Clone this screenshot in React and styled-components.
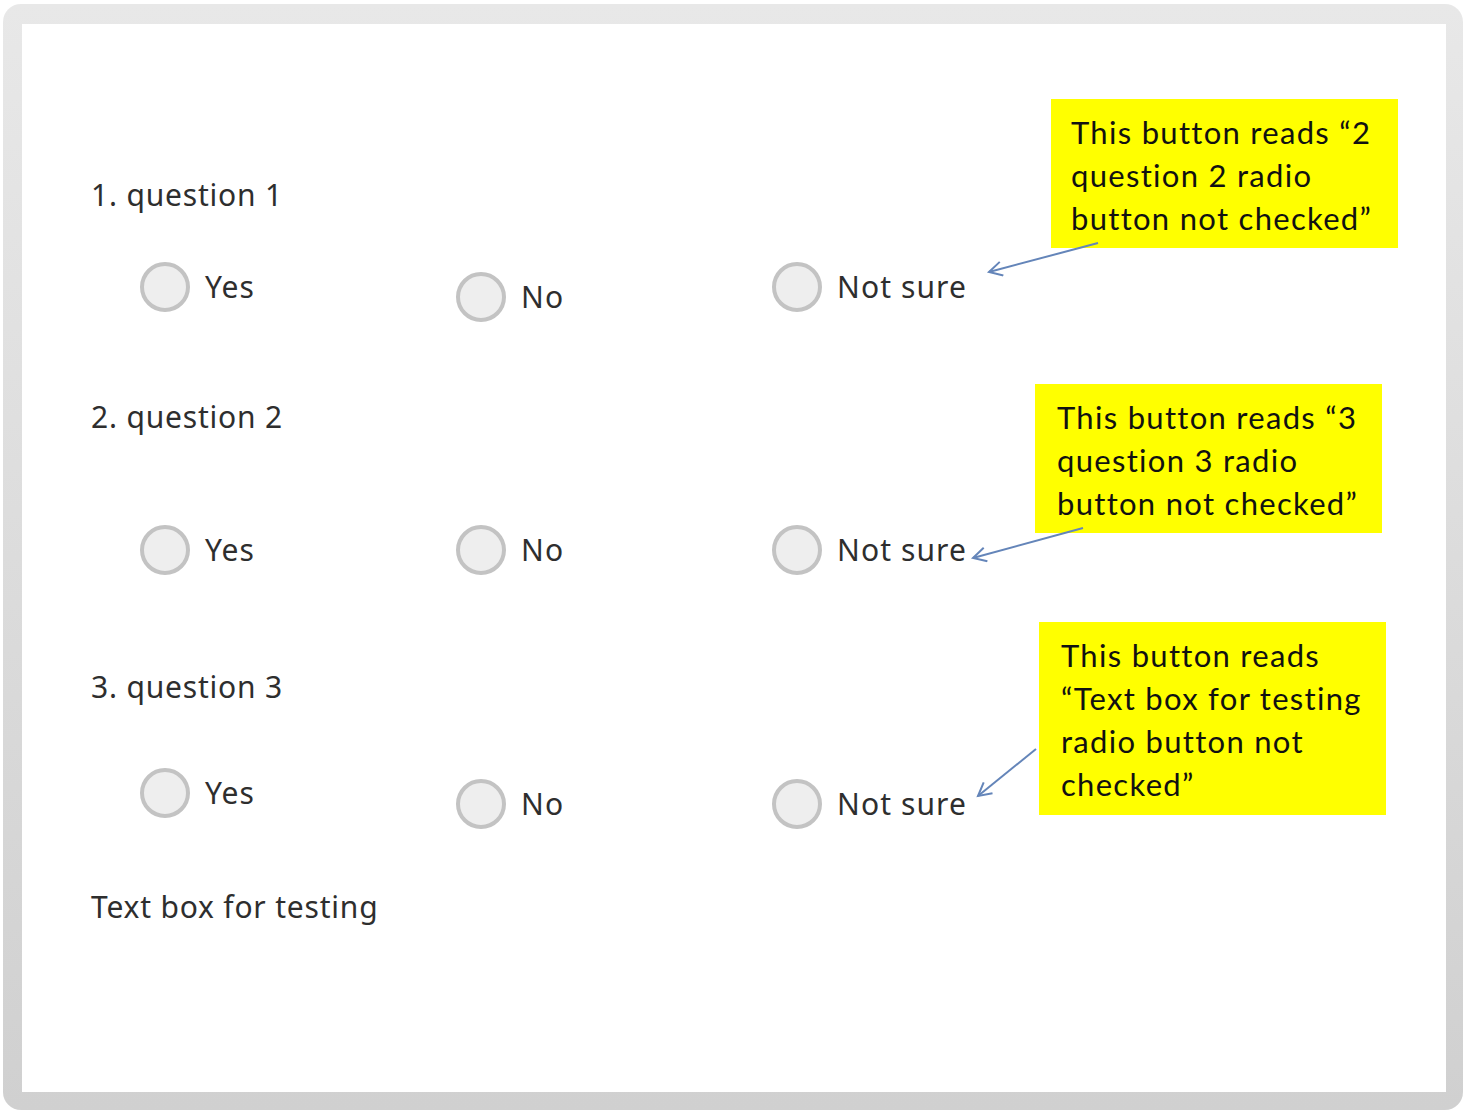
import React from "react"
import styled, { createGlobalStyle } from "styled-components"

const GlobalStyle = createGlobalStyle`
  html, body {
    margin: 0;
    padding: 0;
    background: #ffffff;
  }
`

const Page = styled.div`
  width: 1464px;
  height: 1114px;
  padding: 4px 1px 4px 3px;
  box-sizing: border-box;
`

const Frame = styled.div`
  height: 100%;
  box-sizing: border-box;
  padding: 20px 17px 18px 19px;
  border-radius: 18px;
  background: linear-gradient(#e8e8e8, #d0d0d0);
`

const Panel = styled.div`
  position: relative;
  height: 100%;
  background: #ffffff;
  padding: 151px 0 0 69px;
  box-sizing: border-box;
  font-family: "Noto Sans", "Open Sans", sans-serif;
  color: #2e2e2e;
`

const Question = styled.div`
  font-size: 30px;
  line-height: 40px;
  height: 40px;
  margin-top: ${(p) => p.gap}px;
  letter-spacing: 0.8px;
`

const Options = styled.div`
  display: grid;
  grid-template-columns: 316px 316px 316px;
  align-items: start;
  margin-left: 49px;
  margin-top: ${(p) => p.gap}px;
  height: ${(p) => p.h}px;
`

const Option = styled.label`
  display: flex;
  align-items: center;
  gap: 15px;
  margin-top: ${(p) => p.drop || 0}px;
  font-size: 30px;
  line-height: 50px;
  letter-spacing: 1.1px;
`

const Circle = styled.span`
  width: 50px;
  height: 50px;
  box-sizing: border-box;
  border-radius: 50%;
  border: 4px solid #c3c3c3;
  background: #eeeeee;
  flex: none;
`

const Callout = styled.div`
  position: absolute;
  left: ${(p) => p.x}px;
  top: ${(p) => p.y}px;
  width: 347px;
  height: ${(p) => p.h}px;
  box-sizing: border-box;
  padding: 12px 0 0 ${(p) => p.pad}px;
  background: #ffff00;
  font-family: "Lato", "Liberation Sans", sans-serif;
  font-size: 31px;
  line-height: 43px;
  letter-spacing: 1.3px;
  white-space: nowrap;
  color: #111;
`

const Arrows = styled.svg`
  position: absolute;
  left: 0;
  top: 0;
  width: 100%;
  height: 100%;
  pointer-events: none;
`

const rows = [
  { q: "1. question 1", qGap: 0, gap: 47, h: 60, drops: [0, 10, 0] },
  { q: "2. question 2", qGap: 75, gap: 88, h: 50, drops: [0, 0, 0] },
  { q: "3. question 3", qGap: 92, gap: 61, h: 60, drops: [0, 11, 11] },
]

const labels = ["Yes", "No", "Not sure"]

const notes = [
  { x: 1029, y: 75, h: 149, pad: 20, lines: ["This button reads “2", "question 2 radio", "button not checked”"] },
  { x: 1013, y: 360, h: 149, pad: 22, lines: ["This button reads “3", "question 3 radio", "button not checked”"] },
  { x: 1017, y: 598, h: 193, pad: 22, lines: ["This button reads", "“Text box for testing", "radio button not", "checked”"] },
]

const arrows = [
  [1076, 219, 967, 248],
  [1061, 504, 951, 534],
  [1014, 725, 956, 772],
]

export default function App() {
  return (
    <>
      <GlobalStyle />
      <Page>
        <Frame>
          <Panel>
            {rows.map((r) => (
              <div key={r.q}>
                <Question gap={r.qGap}>{r.q}</Question>
                <Options gap={r.gap} h={r.h}>
                  {labels.map((l, i) => (
                    <Option key={l} drop={r.drops[i]}>
                      <Circle />
                      {l}
                    </Option>
                  ))}
                </Options>
              </div>
            ))}
            <Question gap={59}>Text box for testing</Question>

            {notes.map((n, i) => (
              <Callout key={i} x={n.x} y={n.y} h={n.h} pad={n.pad}>
                {n.lines.map((line) => (
                  <div key={line}>{line}</div>
                ))}
              </Callout>
            ))}

            <Arrows>
              <defs>
                <marker id="head" markerWidth="18" markerHeight="18" refX="15" refY="8" orient="auto" markerUnits="userSpaceOnUse">
                  <path d="M2,1 L15,8 L2,15" fill="none" stroke="#6485b9" strokeWidth="2" />
                </marker>
              </defs>
              {arrows.map(([x1, y1, x2, y2], i) => (
                <line key={i} x1={x1} y1={y1} x2={x2} y2={y2} stroke="#6485b9" strokeWidth="2" markerEnd="url(#head)" />
              ))}
            </Arrows>
          </Panel>
        </Frame>
      </Page>
    </>
  )
}
